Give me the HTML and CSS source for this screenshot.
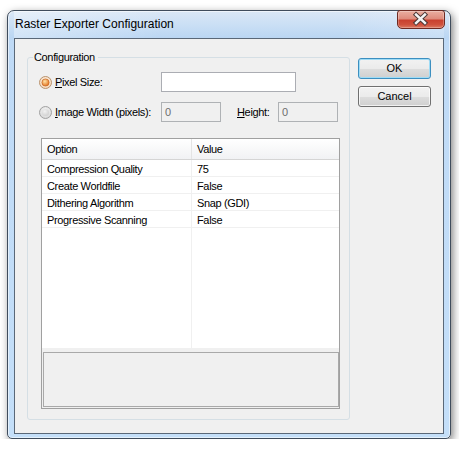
FILE: index.html
```html
<!DOCTYPE html>
<html>
<head>
<meta charset="utf-8">
<link rel="stylesheet" href="styles.css">
</head>
<body>
<div class="window">
  <div class="titlebar">
    <span class="title">Raster Exporter Configuration</span>
    <div class="close">
      <svg width="48" height="19" viewBox="0 0 48 19">
        <path d="M19.5 4.5 L28.5 13 M28.5 4.5 L19.5 13" stroke="#4a3634" stroke-width="4.6" stroke-linecap="square" fill="none"/>
        <path d="M19.5 4.5 L28.5 13 M28.5 4.5 L19.5 13" stroke="#f4f4f4" stroke-width="2.6" stroke-linecap="square" fill="none"/>
      </svg>
    </div>
  </div>
  <div class="client">
    <fieldset class="group">
      <legend>Configuration</legend>
      <div class="row">
        <div class="opt">
          <svg width="13" height="13" viewBox="0 0 13 13">
            <defs>
              <radialGradient id="rg1" cx="40%" cy="35%" r="70%">
                <stop offset="0" stop-color="#ffe2a6"/>
                <stop offset="1" stop-color="#e06c18"/>
              </radialGradient>
              <radialGradient id="ro1" cx="50%" cy="40%" r="60%">
                <stop offset="0" stop-color="#fff6ec"/>
                <stop offset="1" stop-color="#f4d6b8"/>
              </radialGradient>
            </defs>
            <circle cx="6.5" cy="6.5" r="6" fill="url(#ro1)" stroke="#b8936f"/>
            <circle cx="6.5" cy="6.5" r="3.6" fill="url(#rg1)" stroke="#c05a14" stroke-width="0.6"/>
          </svg>
          <span><u>P</u>ixel Size:</span>
        </div>
        <div class="input wide"></div>
      </div>
      <div class="row row2">
        <div class="opt">
          <svg width="13" height="13" viewBox="0 0 13 13">
            <defs>
              <radialGradient id="rg2" cx="50%" cy="40%" r="65%">
                <stop offset="0" stop-color="#fbfbfb"/>
                <stop offset="1" stop-color="#d2d2d2"/>
              </radialGradient>
              <radialGradient id="ri2" cx="40%" cy="35%" r="70%">
                <stop offset="0" stop-color="#f2f2f2"/>
                <stop offset="1" stop-color="#cfcfcf"/>
              </radialGradient>
            </defs>
            <circle cx="6.5" cy="6.5" r="6" fill="url(#rg2)" stroke="#a2a2a2"/>
            <circle cx="6.5" cy="6.5" r="3.6" fill="url(#ri2)"/>
          </svg>
          <span><u>I</u>mage Width (pixels):</span>
        </div>
        <div class="input small disabled">0</div>
        <span class="hlabel"><u>H</u>eight:</span>
        <div class="input small disabled">0</div>
      </div>
      <div class="grid">
        <div class="ghead">
          <div class="c1">Option</div>
          <div class="c2">Value</div>
        </div>
        <div class="gbody">
          <div class="grow"><div class="c1">Compression Quality</div><div class="c2">75</div></div>
          <div class="grow"><div class="c1">Create Worldfile</div><div class="c2">False</div></div>
          <div class="grow"><div class="c1">Dithering Algorithm</div><div class="c2">Snap (GDI)</div></div>
          <div class="grow"><div class="c1">Progressive Scanning</div><div class="c2">False</div></div>
        </div>
        <div class="help"><div class="helpbox"></div></div>
      </div>
    </fieldset>
    <div class="buttons">
      <div class="btn default">OK</div>
      <div class="btn">Cancel</div>
    </div>
  </div>
</div>
</body>
</html>
```
FILE: styles.css
```css
* { box-sizing: border-box; }

body {
  margin: 0;
  background: #fff;
  font-family: "Liberation Sans", Arial, sans-serif;
  font-size: 11px;
  letter-spacing: -0.35px;
  color: #000;
}

.window {
  margin: 10px 0 0 7px;
  width: 444px;
  height: 429px;
  border: 1px solid #3f4c5c;
  border-radius: 7px 7px 5px 5px;
  background: linear-gradient(180deg, #dae7f6 0px, #cadff5 14px, #bad6f3 27px, #bfdaf6 30px, #c4dff9 100%);
  box-shadow: 2px 3px 8px rgba(0,0,0,0.5), inset 0 0 0 1px rgba(255,255,255,0.55);
  padding: 0 6px 4px 6px;
  display: flex;
  flex-direction: column;
}

.titlebar {
  height: 27px;
  flex: none;
  display: flex;
  justify-content: space-between;
  align-items: flex-start;
  background: linear-gradient(100deg, rgba(255,255,255,0.35) 0%, rgba(255,255,255,0) 35%, rgba(255,255,255,0) 75%, rgba(255,255,255,0.2) 100%);
}

.title {
  font-size: 12px;
  letter-spacing: 0;
  line-height: 15px;
  margin: 6px 0 0 1px;
  color: #000;
}

.close {
  width: 48px;
  height: 19px;
  margin: -1px -1px 0 0;
  border: 1px solid #6e2a22;
  border-radius: 3px 3px 5px 5px;
  background: linear-gradient(180deg, #eaaea1 0%, #de8c7d 45%, #c9412f 55%, #cf513c 80%, #dc7a62 100%);
  box-shadow: inset 0 0 0 1px rgba(255,255,255,0.25);
  display: flex;
}
.close svg { margin: -1px 0 0 -1px; }

.client {
  flex: 1;
  border: 1px solid #5a6878;
  background: #f0f0f0;
  display: flex;
  align-items: flex-start;
  padding: 12px 0 0 12px;
}

.group {
  margin: 0;
  width: 323px;
  min-width: 0;
  border: 1px solid #d5dfe5;
  border-radius: 3px;
  padding: 8px 9px 10px 5px;
}

.group legend {
  padding: 0 3px 0 1px;
  line-height: 13px;
}

.row {
  display: flex;
  align-items: center;
  height: 20px;
  margin-left: 6px;
}
.row2 { margin-top: 10px; }

.opt {
  width: 122px;
  flex: none;
  display: flex;
  align-items: center;
}
.opt svg { margin-right: 3px; flex: none; }

.input {
  height: 20px;
  flex: none;
  border: 1px solid #abadb3;
  background: #fff;
}
.wide { width: 135px; }
.small { width: 60px; }
.disabled {
  background: #f0f0f0;
  border-color: #afb2b5;
  color: #6d6d6d;
  padding-left: 3px;
  line-height: 18px;
}

.hlabel {
  width: 41px;
  margin-left: 16px;
  flex: none;
}

.grid {
  margin: 16px 0 0 8px;
  width: 299px;
  height: 271px;
  border: 1px solid #a0a0a0;
  background: #fff;
  display: flex;
  flex-direction: column;
}

.ghead {
  height: 21px;
  flex: none;
  display: flex;
  border-bottom: 1px solid #d5d5d5;
  background: linear-gradient(180deg, #ffffff, #f1f2f4);
  line-height: 19px;
  padding-top: 1px;
}
.ghead .c1 { border-right: 1px solid #e4e4e4; margin-top: -1px; padding-top: 1px; }

.c1 { width: 150px; flex: none; padding-left: 5px; }
.c2 { padding-left: 5px; }

.gbody {
  flex: 1;
  background: linear-gradient(to right, transparent 149px, #f0f0f0 149px, #f0f0f0 150px, transparent 150px) #fff;
}

.grow {
  display: flex;
  height: 17px;
  line-height: 16px;
  padding-top: 1px;
  border-bottom: 1px solid #f0f0f0;
}

.help {
  height: 60px;
  flex: none;
  background: #f0f0f0;
  padding: 4px 0 1px 1px;
}
.helpbox {
  width: 296px;
  height: 55px;
  border: 1px solid #a9a9a9;
}

.buttons {
  margin: 7px 0 0 8px;
  display: flex;
  flex-direction: column;
  gap: 7px;
}

.btn {
  width: 73px;
  height: 21px;
  border: 1px solid #707070;
  border-radius: 3px;
  background: linear-gradient(180deg, #f2f2f2 0%, #ebebeb 50%, #dddddd 51%, #cfcfcf 100%);
  box-shadow: inset 0 0 0 1px rgba(255,255,255,0.7);
  text-align: center;
  line-height: 19px;
  letter-spacing: 0;
}
.btn.default {
  border-color: #3c8fc0;
  box-shadow: inset 0 0 0 1px #9fdcf6;
}
```
